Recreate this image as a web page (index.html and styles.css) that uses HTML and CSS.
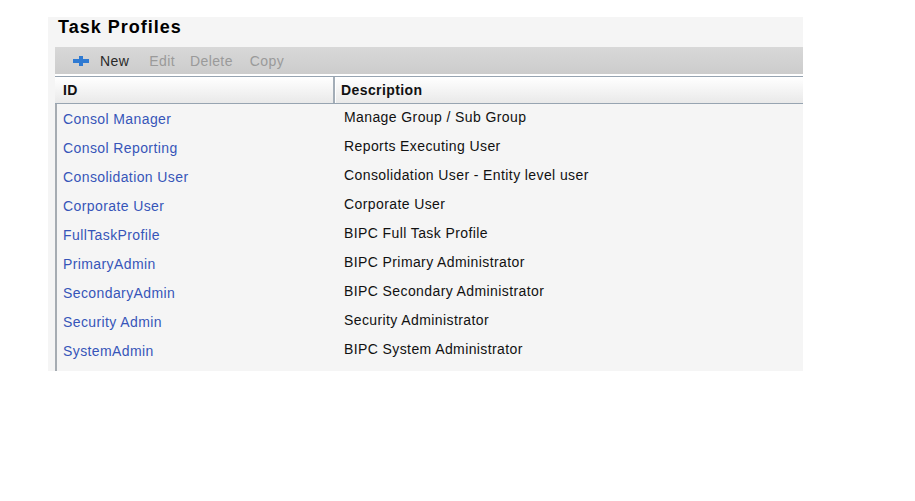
FILE: index.html
```html
<!DOCTYPE html>
<html>
<head>
<meta charset="utf-8">
<link rel="stylesheet" href="styles.css">
</head>
<body>
<div class="panel">
  <div class="title">Task Profiles</div>
  <div class="grid-wrap">
    <div class="toolbar">
      <svg class="plus" width="16" height="10" viewBox="0 0 16 10"><rect x="0" y="3" width="16" height="4" fill="#2f7ad2"/><rect x="6" y="0" width="4" height="10" fill="#2f7ad2"/></svg>
      <span class="tb-btn tb-new">New</span>
      <span class="tb-btn tb-edit">Edit</span>
      <span class="tb-btn tb-delete">Delete</span>
      <span class="tb-btn tb-copy">Copy</span>
    </div>
    <div class="head">
      <div class="hcell hid">ID</div>
      <div class="hcell hdesc">Description</div>
    </div>
    <div class="body">
      <div class="row"><div class="cid">Consol Manager</div><div class="cdesc">Manage Group / Sub Group</div></div>
      <div class="row"><div class="cid">Consol Reporting</div><div class="cdesc">Reports Executing User</div></div>
      <div class="row"><div class="cid">Consolidation User</div><div class="cdesc">Consolidation User - Entity level user</div></div>
      <div class="row"><div class="cid">Corporate User</div><div class="cdesc">Corporate User</div></div>
      <div class="row"><div class="cid">FullTaskProfile</div><div class="cdesc">BIPC Full Task Profile</div></div>
      <div class="row"><div class="cid">PrimaryAdmin</div><div class="cdesc">BIPC Primary Administrator</div></div>
      <div class="row"><div class="cid">SecondaryAdmin</div><div class="cdesc">BIPC Secondary Administrator</div></div>
      <div class="row"><div class="cid">Security Admin</div><div class="cdesc">Security Administrator</div></div>
      <div class="row"><div class="cid">SystemAdmin</div><div class="cdesc">BIPC System Administrator</div></div>
    </div>
  </div>
</div>
</body>
</html>
```
FILE: styles.css
```css
html, body {
  margin: 0;
  padding: 0;
  background: #ffffff;
}
body {
  font-family: "Liberation Sans", Arial, sans-serif;
  font-size: 14px;
  letter-spacing: 0.4px;
}
.panel {
  margin: 17px 0 0 48px;
  width: 755px;
  height: 354px;
  background: #f5f5f5;
  display: flex;
  flex-direction: column;
}
.title {
  height: 30px;
  line-height: 20px;
  padding-left: 10px;
  font-size: 18px;
  font-weight: bold;
  letter-spacing: 1px;
  color: #000;
}
.grid-wrap {
  margin-left: 7px;
  flex: 1;
  display: flex;
  flex-direction: column;
}
.toolbar {
  height: 27px;
  border-bottom: 2px solid #ffffff;
  background: linear-gradient(#d8d8d8, #cccccc);
  display: flex;
  align-items: center;
  padding-left: 18px;
}
.plus {
  display: block;
  margin-right: 11px;
}
.tb-btn {
  color: #9a9a9a;
}
.tb-new {
  color: #2a2a2a;
  margin-right: 20px;
}
.tb-edit {
  margin-right: 15px;
}
.tb-delete {
  margin-right: 17px;
}
.head {
  display: flex;
  height: 26px;
  border-top: 1px solid #97a4b1;
  border-bottom: 1px solid #97a4b1;
  background: linear-gradient(#ffffff, #e9e9e9);
}
.hcell {
  display: flex;
  align-items: center;
  font-weight: bold;
  color: #111;
}
.hid {
  width: 270px;
  padding-left: 8px;
  border-right: 2px solid #a3adb7;
  box-shadow: 1px 0 0 #ffffff;
}
.hdesc {
  padding-left: 6px;
}
.body {
  flex: 1;
  border-left: 2px solid #a6acb2;
}
.row {
  display: flex;
  height: 29px;
  align-items: center;
}
.cid {
  width: 281px;
  padding-left: 6px;
  color: #3755b9;
}
.cdesc {
  color: #111;
  padding-bottom: 4px;
}
```
